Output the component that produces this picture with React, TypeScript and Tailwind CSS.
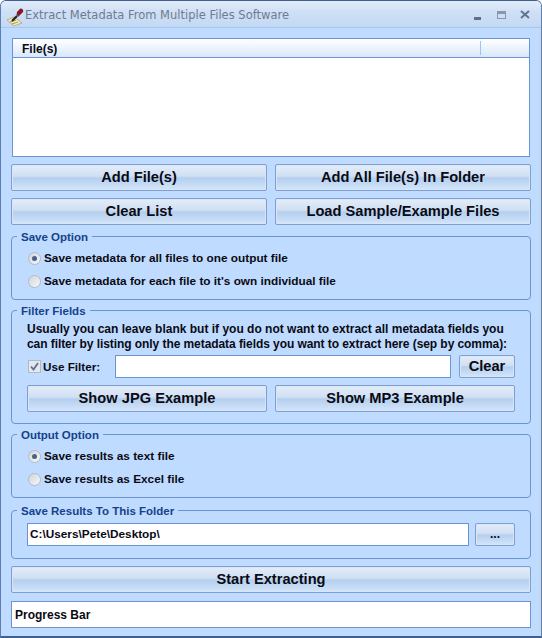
import React from 'react';

const btn =
  'flex items-center justify-center rounded-[2px] border border-[#7f9fd0] bg-[linear-gradient(to_bottom,#e4edf9_0%,#cfdff3_45%,#b4cfee_52%,#d3e5fa_100%)] pb-[2px] font-bold text-[#0a0a14] shadow-[inset_0_0_0_1px_#d8e6f8]';

function AppIcon() {
  return (
    <svg width="20" height="20" viewBox="0 0 20 20" className="shrink-0">
      <path d="M2 14 L9 11 L17 17 L9 20 Z" fill="#f6e9b0" stroke="#a49a6c" strokeWidth="0.7" />
      <path d="M5 16 L11 14 M7 18 L13 16" stroke="#8f8a60" strokeWidth="0.8" />
      <path d="M7 15 L12 10" stroke="#222" strokeWidth="2.2" />
      <path d="M12 10 L14 8" stroke="#555" strokeWidth="3" />
      <path d="M14 7 L16 5" stroke="#8a1420" strokeWidth="4.5" strokeLinecap="round" />
    </svg>
  );
}

function Radio({ checked, label }: { checked?: boolean; label: string }) {
  return (
    <div className="ml-[1px] flex items-center gap-[3px]">
      <span className="flex h-[13px] w-[13px] items-center justify-center rounded-full border border-[#b4bac4] bg-[linear-gradient(135deg,#d0d4da,#f7f8f9)]">
        {checked && <span className="h-[5px] w-[5px] rounded-full bg-[#4a6288]" />}
      </span>
      <span className="text-[11.8px] font-bold leading-[14px] text-[#0a0a14]">{label}</span>
    </div>
  );
}

function Group({ title, className, children }: { title: string; className: string; children: React.ReactNode }) {
  return (
    <fieldset className={`rounded-[4px] border border-[#6a95d2] ${className}`}>
      <legend className="ml-[-10px] px-[4px] text-[11.5px] font-bold leading-[14px] text-[#15428b]">
        <span className="relative top-[1px]">{title}</span>
      </legend>
      {children}
    </fieldset>
  );
}

export default function App() {
  return (
    <div className="flex h-[638px] w-[542px] flex-col overflow-hidden rounded-t-[6px] border border-b-2 border-t-[#3f5f8f] border-x-[#5c7fb0] border-b-[#3f5f8f] bg-[#bfdbff] font-['Liberation_Sans',sans-serif]">
      <div className="flex h-[27px] shrink-0 items-center border-b border-[#a5c8ef] bg-[linear-gradient(to_bottom,#e3edfa_0%,#cfe0f6_40%,#c3d9f3_100%)] pl-[4px] pt-[3px]">
        <AppIcon />
        <span className="font-['DejaVu_Sans',sans-serif] text-[11.5px] text-[#6f7c8f]">
          Extract Metadata From Multiple Files Software
        </span>
        <div className="ml-[185px] flex items-start text-[#6f7f96]">
          <span className="mt-[5px] h-[3px] w-[7px] bg-[#5f7087]" />
          <span className="ml-[16px] mt-[-1px] h-[8px] w-[9px] border border-t-[3px] border-[#8b97a8]" />
          <svg width="10" height="9" viewBox="0 0 10 9" className="ml-[14px] mt-[-2px]">
            <path d="M1 1 L9 8 M9 1 L1 8" stroke="#5f7690" strokeWidth="2" />
          </svg>
        </div>
      </div>

      <div className="flex flex-1 flex-col border-r-[2px] border-[#c8d8ec] pl-[10px] pr-[8px] pt-[10px]">
        <div className="mx-[1px] h-[119px] border border-[#6a95d2] bg-white">
          <div className="flex h-[19px] border-b border-[#6a95d2] bg-[linear-gradient(to_bottom,#ffffff,#d9e8fc)]">
            <span className="w-[467px] pl-[9px] text-[12px] font-bold leading-[20px] text-[#0a0a14]">File(s)</span>
            <span className="my-[2px] w-px bg-[#9cc3f2]" />
          </div>
        </div>

        <div className="mt-[7px] grid grid-cols-2 gap-x-[8px] gap-y-[7px] text-[14.67px]">
          <button className={`${btn} h-[27px]`}>Add File(s)</button>
          <button className={`${btn} h-[27px]`}>Add All File(s) In Folder</button>
          <button className={`${btn} h-[27px]`}>Clear List</button>
          <button className={`${btn} h-[27px]`}>Load Sample/Example Files</button>
        </div>

        <Group title="Save Option" className="mt-[4px] h-[71px] px-[15px]">
          <div className="flex flex-col gap-[9px] pt-[8px]">
            <Radio checked label="Save metadata for all files to one output file" />
            <Radio label="Save metadata for each file to it's own individual file" />
          </div>
        </Group>

        <Group title="Filter Fields" className="mt-[3px] h-[121px] px-[15px]">
          <p className="pt-[5px] text-[12px] font-bold leading-[15px] text-[#0a0a14]">
            Usually you can leave blank but if you do not want to extract all metadata fields you
            <br />
            <span className="tracking-[-0.07px]">can filter by listing only the metadata fields you want to extract here (sep by comma):</span>
          </p>
          <div className="mt-[3px] flex items-center">
            <span className="ml-[1px] flex h-[13px] w-[13px] items-center justify-center border border-[#b4bac4] bg-[#e4e8ee]">
              <svg width="11" height="11" viewBox="0 0 11 11">
                <path d="M2 5.5 L4.5 8.5 L9 2" fill="none" stroke="#5a6f96" strokeWidth="1.8" />
              </svg>
            </span>
            <span className="ml-[2px] w-[72px] text-[11.7px] font-bold text-[#0a0a14]">Use Filter:</span>
            <div className="h-[23px] w-[336px] border border-[#6a95d2] bg-white" />
            <button className={`${btn} ml-[8px] h-[23px] w-[56px] text-[14.67px]`}>Clear</button>
          </div>
          <div className="mt-[7px] grid grid-cols-2 gap-x-[8px] text-[14.67px]">
            <button className={`${btn} h-[27px]`}>Show JPG Example</button>
            <button className={`${btn} h-[27px]`}>Show MP3 Example</button>
          </div>
        </Group>

        <Group title="Output Option" className="mt-[3px] h-[71px] px-[15px]">
          <div className="flex flex-col gap-[9px] pt-[8px]">
            <Radio checked label="Save results as text file" />
            <Radio label="Save results as Excel file" />
          </div>
        </Group>

        <Group title="Save Results To This Folder" className="mt-[5px] h-[56px] px-[15px]">
          <div className="mt-[6px] flex items-center">
            <div className="h-[23px] w-[442px] border border-[#6a95d2] bg-white pl-[2px] text-[11.8px] font-bold leading-[21px] text-[#0a0a14]">
              C:\Users\Pete\Desktop\
            </div>
            <button className={`${btn} ml-[6px] h-[23px] w-[40px] text-[12px]`}>...</button>
          </div>
        </Group>

        <button className={`${btn} mt-[7px] h-[27px] shrink-0 text-[14.67px]`}>Start Extracting</button>

        <div className="mt-[8px] h-[27px] border border-[#6a95d2] bg-white pl-[3px] text-[12px] font-bold leading-[26px] text-[#0a0a14]">
          Progress Bar
        </div>
      </div>
    </div>
  );
}
